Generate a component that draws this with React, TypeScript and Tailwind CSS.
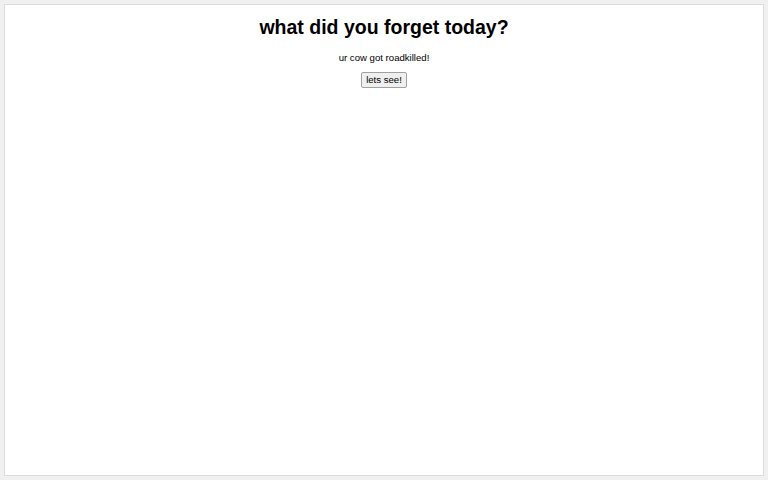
import React from 'react';

export default function App() {
  return (
    <div className="h-[480px] w-[768px] bg-[#f0f0f0] p-[4px] font-['Liberation_Sans',Arial,sans-serif] text-black">
      <div className="flex h-full flex-col items-center border border-[#dcdcdc] bg-white">
        <h1 className="mt-[11px] text-[19.5px] font-bold leading-[23px]">what did you forget today?</h1>
        <p className="mt-[13px] text-[9.6px] leading-[12px]">ur cow got roadkilled!</p>
        <button className="mt-[8px] rounded-[2px] border border-[#a0a0a0] bg-[#efefef] px-[4px] text-[9.6px] leading-[14px]">
          lets see!
        </button>
      </div>
    </div>
  );
}
